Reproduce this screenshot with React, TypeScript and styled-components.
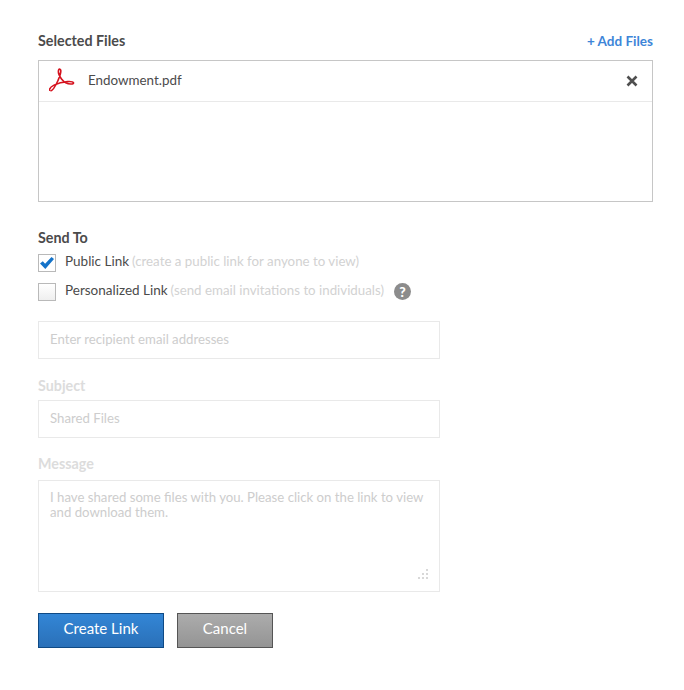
import React from 'react';
import styled, { createGlobalStyle } from 'styled-components';

const GlobalStyle = createGlobalStyle`
  html, body {
    margin: 0;
    padding: 0;
    background: #fff;
    font-family: "Lato", "Noto Sans", sans-serif;
  }
`;

const Page = styled.div`
  width: 684px;
  height: 690px;
  box-sizing: border-box;
  padding: 32px 31px 0 38px;
`;

const HeaderRow = styled.div`
  display: flex;
  justify-content: space-between;
  align-items: center;
  height: 18px;
  margin-bottom: 10px;
`;

const Heading = styled.div<{ $muted?: boolean }>`
  font-size: 14.3px;
  line-height: 18px;
  font-weight: 700;
  color: ${({ $muted }) => ($muted ? '#dcdcdc' : '#4b4b4b')};
`;

const AddFiles = styled.a`
  font-size: 13.5px;
  font-weight: 700;
  color: #3d85d8;
`;

const FileBox = styled.div`
  height: 142px;
  box-sizing: border-box;
  border: 1px solid #c6c6c6;
`;

const FileRow = styled.div`
  display: flex;
  align-items: center;
  height: 40px;
  padding: 0 14px 0 10px;
  border-bottom: 1px solid #e9e9e9;
`;

const FileName = styled.span`
  flex: 1;
  margin-left: 13px;
  padding-bottom: 2px;
  font-size: 13.4px;
  color: #4b4b4b;
`;

const SendTo = styled.div`
  margin-top: 27px;
  margin-bottom: 1px;
`;

const CheckRow = styled.div`
  display: flex;
  align-items: center;
  height: 29px;
`;

const CheckBox = styled.span<{ $checked?: boolean }>`
  display: flex;
  align-items: center;
  justify-content: center;
  width: 18px;
  height: 18px;
  box-sizing: border-box;
  border: 1px solid #b9b9b9;
  background: ${({ $checked }) => ($checked ? '#fff' : 'linear-gradient(#fff, #efefef)')};
`;

const CheckLabel = styled.span`
  margin-left: 9px;
  padding-bottom: 4px;
  font-size: 13.5px;
  color: #4b4b4b;
`;

const CheckHint = styled.span`
  margin-left: 3px;
  padding-bottom: 4px;
  font-size: 13.3px;
  color: #d2d2d2;
`;

const HelpBadge = styled.span`
  display: flex;
  align-items: center;
  justify-content: center;
  width: 17px;
  height: 17px;
  margin-left: 10px;
  border-radius: 50%;
  background: #8c8c8c;
  color: #fff;
  font-size: 14px;
  font-weight: 900;
`;

const Form = styled.div`
  width: 402px;
`;

const Field = styled.div`
  display: flex;
  align-items: center;
  height: 38px;
  box-sizing: border-box;
  padding: 0 11px 2px;
  border: 1px solid #e9e9e9;
  font-size: 13.2px;
  color: #cdcdcd;
`;

const RecipientField = styled(Field)`
  margin-top: 15px;
`;

const SubjectLabel = styled(Heading)`
  margin-top: 18px;
  margin-bottom: 5px;
`;

const MessageLabel = styled(Heading)`
  margin-top: 17px;
  margin-bottom: 7px;
`;

const MessageBox = styled.div`
  position: relative;
  height: 112px;
  box-sizing: border-box;
  padding: 9px 11px;
  border: 1px solid #e9e9e9;
  font-size: 13.2px;
  line-height: 15px;
  color: #cdcdcd;
`;

const Grip = styled.svg`
  position: absolute;
  right: 10px;
  bottom: 11px;
`;

const Buttons = styled.div`
  display: flex;
  gap: 13px;
  margin-top: 21px;
`;

const Button = styled.button<{ $primary?: boolean }>`
  height: 35px;
  width: ${({ $primary }) => ($primary ? '126px' : '96px')};
  padding: 0 0 6px;
  font-family: inherit;
  font-size: 15px;
  color: #fff;
  border: 1px solid ${({ $primary }) => ($primary ? '#0f4a85' : '#555')};
  background: ${({ $primary }) =>
    $primary ? 'linear-gradient(#3386d6, #2a70b8)' : 'linear-gradient(#acacac, #949494)'};
`;

const PdfIcon = () => (
  <svg width="26" height="26" viewBox="0 0 26 26" fill="none">
    <path
      d="M1.500 23c2.500-.5 5-5 7.500-10.500 1.500-3.500 3.100-7 2.800-10-.1-1.300-1.500-2-2.100-.6-.7 1.800.4 5.800 2.800 9 2.400 3.100 5.800 5 9.300 5.100 1.900.1 3-.5 2.700-1.300-.4-1-2.800-1.300-6-1.100-4.300.3-9.700 1.600-13.500 3.500-2.500 1.200-4.200 3.200-4.500 4.500-.1.500.2.800.7.700"
      stroke="#d5121e"
      strokeWidth="1.600"
      strokeLinejoin="round"
    />
  </svg>
);

const CloseIcon = () => (
  <svg width="12" height="12" viewBox="0 0 12 12">
    <path d="M1.500 1.500l9 9M10.500 1.500l-9 9" stroke="#4f4f4f" strokeWidth="2.600" />
  </svg>
);

const CheckMark = () => (
  <svg width="16" height="14" viewBox="0 0 16 14">
    <path d="M1 7.500l2.800-2.300 2.300 2.500L12.500 1l2.500 2-8.700 10z" fill="#1473c9" />
  </svg>
);

const App = () => (
  <Page>
    <GlobalStyle />
    <HeaderRow>
      <Heading>Selected Files</Heading>
      <AddFiles>+ Add Files</AddFiles>
    </HeaderRow>
    <FileBox>
      <FileRow>
        <PdfIcon />
        <FileName>Endowment.pdf</FileName>
        <CloseIcon />
      </FileRow>
    </FileBox>
    <SendTo>
      <Heading>Send To</Heading>
    </SendTo>
    <CheckRow>
      <CheckBox $checked>
        <CheckMark />
      </CheckBox>
      <CheckLabel>Public Link</CheckLabel>
      <CheckHint>(create a public link for anyone to view)</CheckHint>
    </CheckRow>
    <CheckRow>
      <CheckBox />
      <CheckLabel>Personalized Link</CheckLabel>
      <CheckHint>(send email invitations to individuals)</CheckHint>
      <HelpBadge>?</HelpBadge>
    </CheckRow>
    <Form>
      <RecipientField>Enter recipient email addresses</RecipientField>
      <SubjectLabel $muted>Subject</SubjectLabel>
      <Field>Shared Files</Field>
      <MessageLabel $muted>Message</MessageLabel>
      <MessageBox>
        I have shared some files with you. Please click on the link to view and download them.
        <Grip width="12" height="12" viewBox="0 0 12 12" fill="#d8d8d8">
          <rect x="9" y="1" width="2" height="2" />
          <rect x="5" y="5" width="2" height="2" />
          <rect x="9" y="5" width="2" height="2" />
          <rect x="1" y="9" width="2" height="2" />
          <rect x="5" y="9" width="2" height="2" />
          <rect x="9" y="9" width="2" height="2" />
        </Grip>
      </MessageBox>
    </Form>
    <Buttons>
      <Button $primary>Create Link</Button>
      <Button>Cancel</Button>
    </Buttons>
  </Page>
);

export default App;
